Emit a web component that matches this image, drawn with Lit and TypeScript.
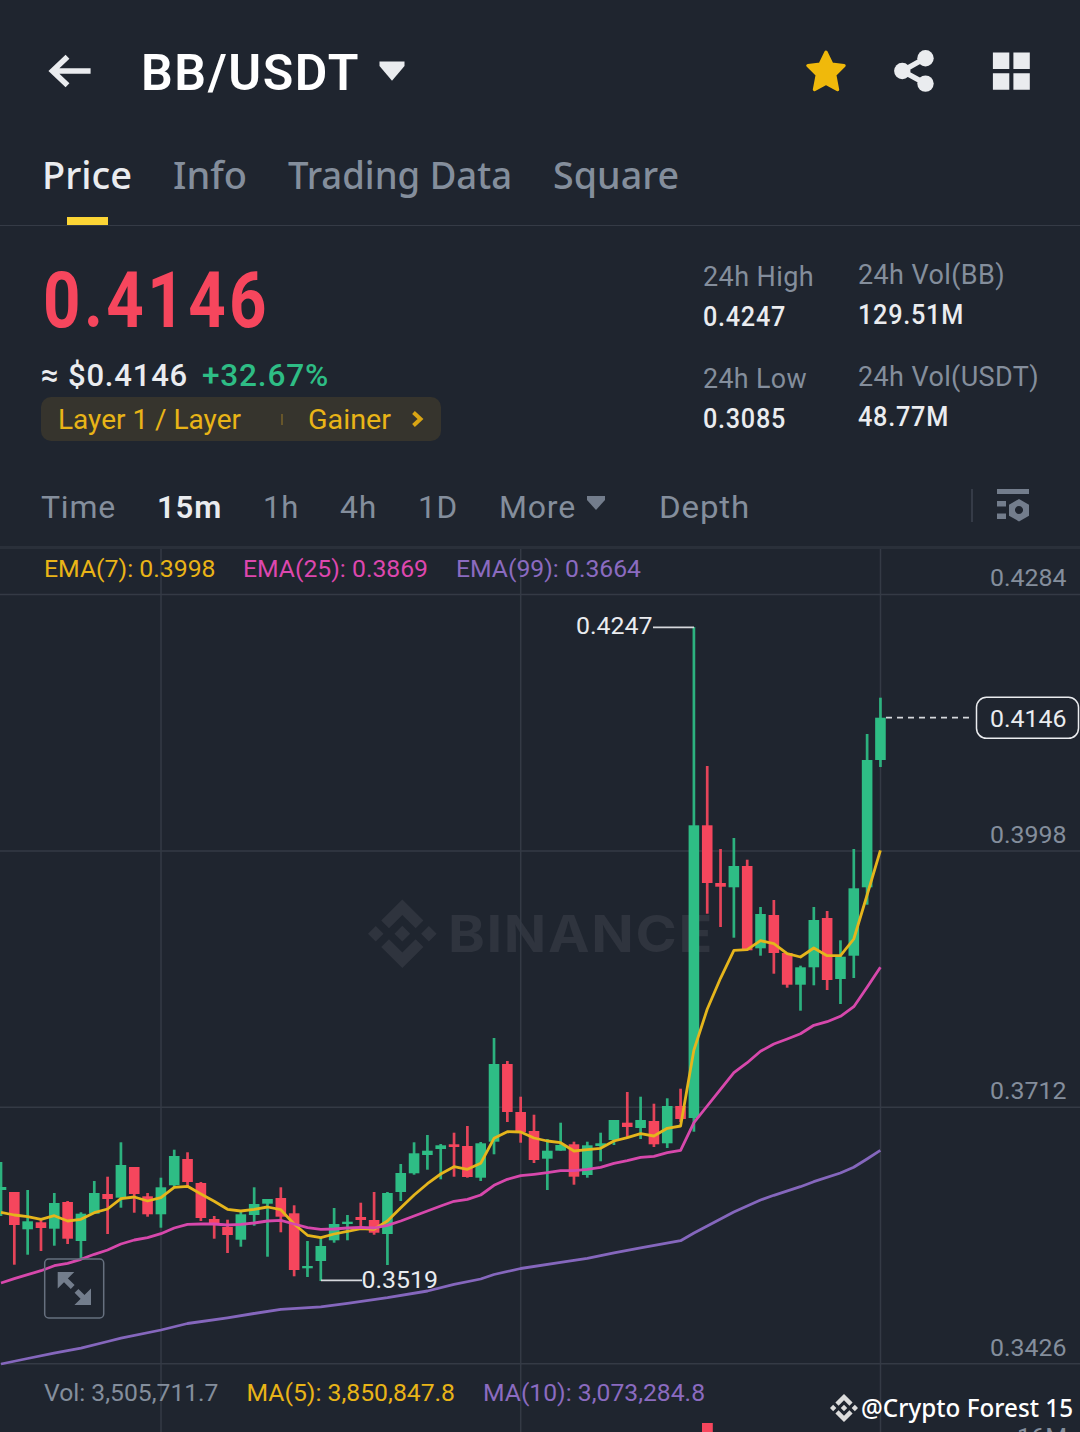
import { LitElement, html, svg, css } from "lit";
import { customElement, property } from "lit/decorators.js";

const LOGO =
  "M38.73 53.2l24.59-24.58 24.6 24.6 14.3-14.31L63.32 0 24.43 38.9zM0 63.31l14.3-14.31 14.31 14.31-14.31 14.3zM38.73 73.41l24.59 24.59 24.6-24.6 14.31 14.29-38.9 38.91-38.91-38.88zM98 63.31l14.3-14.31 14.31 14.3-14.31 14.32zM77.83 63.3L63.32 48.78 48.82 63.28 63.32 77.8z";

/** A single line of text whose box is its cap height and whose advance is fixed. */
const label = (text: string, width: number, cap: number, cls = "") => svg`
  <svg class="label ${cls}" width=${width} height=${cap}>
    <text x="0" y=${cap} textLength=${width} lengthAdjust="spacingAndGlyphs">${text}</text>
  </svg>`;

const labelStyles = css`
  .label {
    display: block;
    flex: none;
    overflow: visible;
    fill: currentColor;
  }
  svg {
    display: block;
    flex: none;
  }
`;

@customElement("pair-header")
class PairHeader extends LitElement {
  static styles = [
    labelStyles,
    css`
      :host {
        display: flex;
        align-items: center;
        height: 141px;
        padding: 0 50px 0 48px;
        box-sizing: border-box;
        color: #eaecef;
        fill: #eaecef;
      }
      .title {
        margin: 3px 0 0 49px;
        color: #fff;
        font: 600 50px "Roboto", sans-serif;
        letter-spacing: 1.6px;
      }
      .caret {
        margin-left: 19px;
      }
      .actions {
        display: flex;
        align-items: center;
        margin-left: auto;
      }
      .share {
        margin: 0 58px 0 47px;
      }
    `,
  ];
  render() {
    return html`
      <svg width="44" height="34" viewBox="0 0 44 34">
        <path d="M19.5 2.8L4.5 17l15 14.2M4.5 17H42.6" fill="none" stroke="#eaecef" stroke-width="5.6" />
      </svg>
      <div class="title">${label("BB/USDT", 219, 35.5)}</div>
      <svg class="caret" width="26" height="20" viewBox="0 0 26 20">
        <path d="M.5 .5h25v4.6L13 19.8.5 5.1z" />
      </svg>
      <div class="actions">
        <svg width="42" height="42" viewBox="0 0 42 42">
          <path
            d="M21 2.2l5.8 12 12.2 1.4-9.3 9.2 2.8 14.7L21 33.2 9.5 39.5l2.8-14.7L3 15.6l12.2-1.4z"
            fill="#f0b90b" stroke="#f0b90b" stroke-width="3.4" stroke-linejoin="round"
          />
        </svg>
        <svg class="share" width="40" height="42" viewBox="0 0 40 42">
          <path d="M31.5 8L8.5 21l23 12.6" fill="none" stroke="#eaecef" stroke-width="5.4" />
          <circle cx="8.3" cy="21" r="8.2" />
          <circle cx="31.5" cy="8.3" r="8.2" />
          <circle cx="31.5" cy="33.6" r="8.2" />
        </svg>
        <svg width="38" height="38" viewBox="0 0 38 38">
          <path d="M.9 .5h16.4v16.6H.9zM21.4 .5h16.4v16.6H21.4zM.9 21.2h16.4v16.6H.9zM21.4 21.2h16.4v16.6H21.4z" />
        </svg>
      </div>
    `;
  }
}

@customElement("section-tabs")
class SectionTabs extends LitElement {
  static styles = [
    labelStyles,
    css`
      :host {
        display: flex;
        align-items: stretch;
        height: 85px;
        box-sizing: border-box;
        padding-left: 42px;
        border-bottom: 1px solid #353b46;
        color: #848e9c;
        font: 500 37.5px "Noto Sans", sans-serif;
      }
      .tab {
        display: flex;
        flex-direction: column;
        align-items: center;
        justify-content: space-between;
        padding-top: 20.5px;
        margin-right: 41px;
      }
      .active {
        color: #eaecef;
      }
      .active::after {
        content: "";
        width: 41px;
        height: 8px;
        background: #fcd535;
      }
    `,
  ];
  render() {
    const tabs: [string, number][] = [["Price", 90], ["Info", 74], ["Trading Data", 224], ["Square", 126]];
    return html`${tabs.map(
      ([t, w], i) => html`<div class="tab ${i === 0 ? "active" : ""}">${label(t, w, 27)}</div>`
    )}`;
  }
}

@customElement("price-summary")
class PriceSummary extends LitElement {
  static styles = [
    labelStyles,
    css`
      :host {
        display: flex;
        justify-content: space-between;
        height: 240px;
        box-sizing: border-box;
        padding: 46px 40px 0 41px;
        font-family: "Roboto", sans-serif;
      }
      .last {
        margin-left: 2px;
        color: #f6465d;
        font-size: 77px;
        font-weight: 700;
        letter-spacing: 4px;
      }
      .fiat {
        display: flex;
        gap: 14px;
        margin-top: 36px;
        font-size: 32px;
        font-weight: 500;
        letter-spacing: 0.8px;
        color: #eaecef;
      }
      .up {
        color: #2ebd85;
      }
      .tags {
        display: flex;
        align-items: center;
        width: 400px;
        height: 44px;
        margin-top: 11px;
        padding: 0 17px 0;
        box-sizing: border-box;
        border-radius: 10px;
        background: #36342d;
        color: #e9b417;
        font-size: 28px;
      }
      .split {
        width: 3px;
        height: 11px;
        margin: 0 25px 0 40px;
        background: #67562a;
      }
      .chevron {
        margin-left: 21px;
      }
      .stats {
        display: flex;
        gap: 43px;
        font-size: 28px;
      }
      .low {
        width: 112px;
        padding-top: 2px;
      }
      .high {
        width: 182px;
      }
      .name {
        margin-top: -8px;
        color: #848e9c;
        letter-spacing: 0.4px;
      }
      .value {
        margin: 20px 0 50px;
        color: #eaecef;
        font-weight: 500;
        letter-spacing: 0.8px;
      }
    `,
  ];
  stat(name: string, nw: number, value: string, vw: number) {
    return html`<div class="name">${label(name, nw, 20)}</div>
      <div class="value">${label(value, vw, 20)}</div>`;
  }
  render() {
    return html`
      <div>
        <div class="last">${label("0.4146", 227, 55)}</div>
        <div class="fiat">${label("≈ $0.4146", 147, 23)}<span class="up">${label("+32.67%", 127, 23)}</span></div>
        <div class="tags">
          ${label("Layer 1 / Layer", 183, 20)}
          <div class="split"></div>
          ${label("Gainer", 83, 20)}
          <svg class="chevron" width="12" height="16" viewBox="0 0 12 16">
            <path d="M1.5 1.5L8.5 8l-7 6.5" fill="none" stroke="#d9a514" stroke-width="4" />
          </svg>
        </div>
      </div>
      <div class="stats">
        <div class="low">${this.stat("24h High", 111, "0.4247", 83)}${this.stat("24h Low", 104, "0.3085", 83)}</div>
        <div class="high">
          ${this.stat("24h Vol(BB)", 147, "129.51M", 106)}${this.stat("24h Vol(USDT)", 181, "48.77M", 91)}
        </div>
      </div>
    `;
  }
}

@customElement("interval-bar")
class IntervalBar extends LitElement {
  static styles = [
    labelStyles,
    css`
      :host {
        display: flex;
        align-items: center;
        height: 80px;
        padding: 0 50px 2px 41px;
        box-sizing: border-box;
        color: #848e9c;
        fill: #737d8c;
        font: 400 31.5px "Roboto", sans-serif;
        letter-spacing: 0.8px;
      }
      .item {
        display: flex;
        align-items: flex-start;
        gap: 11px;
        margin-right: 41px;
        padding-top: 3px;
      }
      .active {
        color: #eaecef;
        font-weight: 600;
      }
      .more {
        margin-right: 54px;
      }
      .rule {
        width: 2px;
        height: 33px;
        margin: 0 24px 0 auto;
        background: #353b47;
      }
    `,
  ];
  render() {
    return html`
      <div class="item">${label("Time", 75, 22)}</div>
      <div class="item active">${label("15m", 65, 22)}</div>
      <div class="item">${label("1h", 36, 22)}</div>
      <div class="item">${label("4h", 37, 22)}</div>
      <div class="item">${label("1D", 40, 22)}</div>
      <div class="item more">
        ${label("More", 77, 22)}
        <svg width="18" height="14" viewBox="0 0 18 14"><path d="M0 0h18v4L9 14 0 4z" /></svg>
      </div>
      <div class="item">${label("Depth", 91, 22)}</div>
      <div class="rule"></div>
      <svg width="33" height="34" viewBox="0 0 33 34">
        <path d="M0 1h32v5H0zM0 13h9v5.5H0zM0 25.5h9V31H0z" />
        <path fill-rule="evenodd" d="M22 11l10 5.7v11L22 33.4l-10-5.7v-11zM22 18a4 4 0 1 0 .01 0z" />
      </svg>
    `;
  }
}

// Candle rows: direction, body top, body bottom, wick top, wick bottom.
const CANDLES: [number, number, number, number, number][] = [
  [1, 1187, 1190, 1162, 1216], [0, 1192, 1225, 1192, 1264.7], [1, 1221.3, 1229.3, 1190, 1254.7],
  [0, 1222.3, 1228, 1218, 1251], [1, 1203, 1228.7, 1193, 1245.7], [0, 1202, 1238.7, 1201, 1244],
  [1, 1213.7, 1241, 1212.3, 1258], [1, 1193, 1213.7, 1181, 1214], [0, 1194, 1199, 1176.7, 1234],
  [1, 1165, 1197.7, 1142.3, 1207.7], [0, 1167, 1194, 1167, 1212.7], [0, 1196.3, 1214.3, 1193, 1216.7],
  [1, 1187.3, 1214.3, 1177.7, 1227.7], [1, 1156, 1185.3, 1149.7, 1187], [0, 1159, 1182, 1152.3, 1187],
  [0, 1183, 1218, 1182, 1221], [0, 1219, 1225, 1216, 1238.7], [0, 1227, 1235, 1219.7, 1253],
  [1, 1214.3, 1239.7, 1211.7, 1246.7], [1, 1204, 1215, 1187.3, 1225.7], [1, 1199, 1203.7, 1199, 1256.7],
  [0, 1198, 1216.7, 1187.3, 1232.3], [0, 1213.3, 1270, 1205.3, 1276.3], [1, 1266, 1268.3, 1241, 1277],
  [1, 1246, 1261, 1237.3, 1281], [1, 1224, 1240.3, 1208, 1242.7], [1, 1221.7, 1224, 1215, 1240.3],
  [0, 1217, 1220, 1202.7, 1228], [0, 1220, 1232.7, 1192, 1234.7], [1, 1193, 1234, 1192, 1265],
  [1, 1173, 1192, 1164, 1201], [1, 1153.3, 1173.3, 1142.3, 1174.7], [1, 1150.7, 1155, 1135, 1169.7],
  [1, 1145.3, 1149, 1144, 1179.3], [0, 1144.3, 1147, 1132.7, 1176.7], [0, 1146, 1177, 1126, 1177.7],
  [1, 1143.3, 1177.7, 1142, 1181], [1, 1064, 1141.7, 1038, 1154.3], [0, 1064, 1112, 1061, 1122],
  [0, 1112, 1132.3, 1096.7, 1142.7], [0, 1131, 1160, 1114.7, 1163], [1, 1150.7, 1158.7, 1139, 1190],
  [1, 1145, 1150.7, 1122.7, 1150.7], [0, 1144.3, 1176.7, 1141.7, 1184.7], [1, 1145.3, 1175, 1141.7, 1177.7],
  [1, 1143.3, 1146, 1132.7, 1161.3], [1, 1120, 1140, 1120, 1145], [0, 1122.7, 1127, 1092, 1137],
  [1, 1120, 1128, 1096.7, 1139], [0, 1121, 1144.3, 1103.7, 1147], [1, 1106, 1143.3, 1098.3, 1148],
  [0, 1106, 1119, 1088.7, 1122], [1, 825.3, 1118, 627, 1131.7], [0, 825.3, 883, 766, 913.7],
  [0, 883, 886.7, 849, 927], [1, 866, 887.3, 838, 937.7], [0, 866, 950.3, 859.7, 950.3],
  [1, 914, 948.3, 907, 955.7], [0, 915, 953, 900, 973.7], [0, 953, 984.7, 953, 987.7],
  [1, 967.3, 984.7, 965.7, 1010.7], [1, 920, 967.3, 907, 985.3], [0, 918, 980, 911, 990],
  [1, 956.7, 979, 940.3, 1004], [1, 888.3, 955.7, 849, 978], [1, 760, 887.3, 734, 904.7],
  [1, 717.7, 760, 697.7, 767],
];
const EMA7 = [
  1212.3, 1215, 1216.7, 1219.3, 1215.7, 1221, 1219.3, 1212.7, 1209, 1198.7, 1197, 1201, 1197.7, 1187.3, 1186.3, 1194,
  1201.3, 1209.3, 1211, 1209.3, 1207, 1209.7, 1224, 1235.3, 1237.7, 1234, 1231.3, 1228.7, 1229.3, 1221, 1207.7, 1195,
  1183.7, 1174, 1166.7, 1169.3, 1163.3, 1138.3, 1131.7, 1132, 1138, 1141, 1142.7, 1151, 1149.7, 1148.3, 1141, 1137.7,
  1133.7, 1136, 1128.3, 1126, 1050, 1009.3, 978.3, 950.3, 949.7, 940.7, 943.7, 953.7, 957, 948, 955.7, 955.7, 939, 895,
  850.3,
];
const EMA25 = [
  1283, 1278.7, 1274.7, 1270.7, 1265.7, 1263.3, 1259.3, 1254.3, 1250, 1244, 1240, 1237.7, 1233.7, 1228, 1224.3, 1224,
  1224, 1225, 1224.3, 1223, 1221, 1220.3, 1224, 1227.7, 1229.3, 1229, 1228, 1227.3, 1228, 1225.3, 1221, 1216, 1211,
  1206, 1201.3, 1199.3, 1195, 1185.3, 1179.3, 1175.7, 1174.3, 1172.7, 1170.7, 1170.7, 1169.3, 1167.3, 1163.3, 1160.7,
  1157.3, 1156.3, 1152.7, 1150.3, 1122.7, 1106, 1089.3, 1072.7, 1062.7, 1051.3, 1044, 1039, 1033.7, 1025.3, 1021.7,
  1016.3, 1006.7, 987.3, 967.3,
];
const EMA99 =
  "1,1364 27.6,1358.5 54,1353.2 81,1348.2 107.6,1341.5 121,1338.2 161,1330 187.5,1323.5 227.5,1317.8 254,1313.5 280.8,1309.3 320.8,1306.8 347.5,1303.3 387.5,1297.7 427.5,1291 454,1284.3 480.7,1279 494,1274.5 520.7,1268.5 560.6,1262.3 587.3,1258.3 614,1252.8 640.6,1247.8 680.6,1240.7 694,1233 733.8,1212 760.5,1200 773.8,1195.3 800.4,1186.7 813.7,1181.7 840.4,1173 853.7,1167.3 867,1159 880.3,1150.3";

const slotX = (i: number) => 1 + i * 13.325;
const polyline = (ys: number[]) => ys.map((y, i) => `${slotX(i).toFixed(1)},${y}`).join(" ");

@customElement("candle-chart")
class CandleChart extends LitElement {
  static styles = css`
    :host {
      display: block;
      height: 886px;
    }
    .plot {
      display: block;
      font: 400 24px "Roboto", sans-serif;
    }
    .grid {
      stroke: #343a45;
      stroke-width: 1.5;
    }
    .up {
      fill: #2ebd85;
    }
    .down {
      fill: #f6465d;
    }
    .line {
      fill: none;
      stroke-width: 2.8;
      stroke-linejoin: round;
    }
    .muted {
      fill: #848e9c;
    }
    .bright {
      fill: #eaecef;
    }
    .yellow {
      fill: #e9b417;
    }
    .pink {
      fill: #dd47ae;
    }
    .purple {
      fill: #8b6bc0;
    }
    .brand {
      fill: #2f343e;
      font: 700 51px "Inter", sans-serif;
      letter-spacing: 1.5px;
    }
    .pointer {
      stroke: #d5d8dc;
      stroke-width: 1.7;
      fill: none;
    }
  `;
  text(t: string, x: number, y: number, w: number, cls: string) {
    return svg`<text class=${cls} x=${x} y=${y} textLength=${w} lengthAdjust="spacingAndGlyphs">${t}</text>`;
  }
  render() {
    return html`
      <svg class="plot" width="1080" height="886" viewBox="0 546 1080 886">
        <g class="brand">
          <path d=${LOGO} transform="translate(368 899.4) scale(.542)" />
          <text x="448" y="952.3" textLength="266" lengthAdjust="spacingAndGlyphs">BINANCE</text>
        </g>
        <rect y="546" width="1080" height="3" fill="#2a303a" />
        <path class="grid" fill="none" d="M161 549V1432M520.7 549V1432M880.5 549V1432M0 594.5H1080M0 851H1080M0 1107.3H1080M0 1363.7H1080" />
        ${CANDLES.map(([up, top, bottom, high, low], i) => {
          const x = slotX(i);
          return svg`<g class=${up ? "up" : "down"}>
            <rect x=${x - 1.35} y=${high} width="2.7" height=${low - high} opacity=".92" />
            <rect x=${x - 5.3} y=${top} width="10.6" height=${bottom - top} />
          </g>`;
        })}
        <rect class="down" x="702" y="1423" width="10.8" height="9" />
        <polyline class="line" stroke="#8567bd" points=${EMA99} />
        <polyline class="line" stroke="#e5b51c" points=${polyline(EMA7)} />
        <polyline class="line" stroke="#d748ac" points=${polyline(EMA25)} />
        <path class="pointer" d="M653 627.3h41M321 1280.3h41" />
        <path class="pointer" d="M886 717.6h84" stroke-dasharray="6 5" />
        ${this.text("0.4247", 576, 634, 76.5, "bright")} ${this.text("0.3519", 361.5, 1288, 76.5, "bright")}
        ${this.text("EMA(7): 0.3998", 44, 577, 171.5, "yellow")}
        ${this.text("EMA(25): 0.3869", 243, 577, 185, "pink")}
        ${this.text("EMA(99): 0.3664", 456, 577, 185, "purple")}
        ${this.text("0.4284", 990, 586, 76.5, "muted")} ${this.text("0.3998", 990, 843, 76.5, "muted")}
        ${this.text("0.3712", 990, 1099, 76.5, "muted")} ${this.text("0.3426", 990, 1356, 76.5, "muted")}
        ${this.text("Vol: 3,505,711.7", 44, 1401, 174.5, "muted")}
        ${this.text("MA(5): 3,850,847.8", 246.5, 1401, 208.5, "yellow")}
        ${this.text("MA(10): 3,073,284.8", 483, 1401, 222, "purple")}
        ${this.text("16M", 1017, 1444.5, 50, "muted")}
        <rect x="976.5" y="697.3" width="102" height="41" rx="10" fill="#1f252f" stroke="#eaecef" stroke-width="1.5" />
        ${this.text("0.4146", 990, 727, 76.5, "bright")}
        <rect x="44.7" y="1259" width="59" height="59" rx="4" fill="none" stroke="#66707f" stroke-width="1.5" />
        <g fill="#737d8c" stroke="#737d8c">
          <path stroke="none" d="M57.7 1272h16.6l-16.6 16.6zM91 1305H74.4L91 1288.4z" />
          <path stroke-width="5.4" d="M63 1277.3l9.7 9.7M76.5 1290.8l9.7 9.7" />
        </g>
      </svg>
    `;
  }
}

@customElement("author-credit")
class AuthorCredit extends LitElement {
  @property() name = "";
  static styles = [
    labelStyles,
    css`
      :host {
        display: flex;
        align-items: center;
        gap: 3px;
        color: #fff;
        font: 500 24.5px "Noto Sans", sans-serif;
      }
      .mark {
        fill: #dcdcdc;
      }
    `,
  ];
  render() {
    return html`<svg class="mark" width="28" height="28" viewBox="0 0 126.61 126.61"><path d=${LOGO} /></svg>
      ${label(this.name, 212, 17.5)}`;
  }
}

@customElement("app-root")
class AppRoot extends LitElement {
  static styles = css`
    :host {
      display: block;
      position: relative;
      width: 1080px;
      height: 1432px;
      overflow: hidden;
      background: #1f252f;
    }
    .credit {
      position: absolute;
      right: 7px;
      bottom: 10px;
    }
  `;
  render() {
    return html`
      <pair-header></pair-header>
      <section-tabs></section-tabs>
      <price-summary></price-summary>
      <interval-bar></interval-bar>
      <candle-chart></candle-chart>
      <author-credit class="credit" name="@Crypto Forest 15"></author-credit>
    `;
  }
}
